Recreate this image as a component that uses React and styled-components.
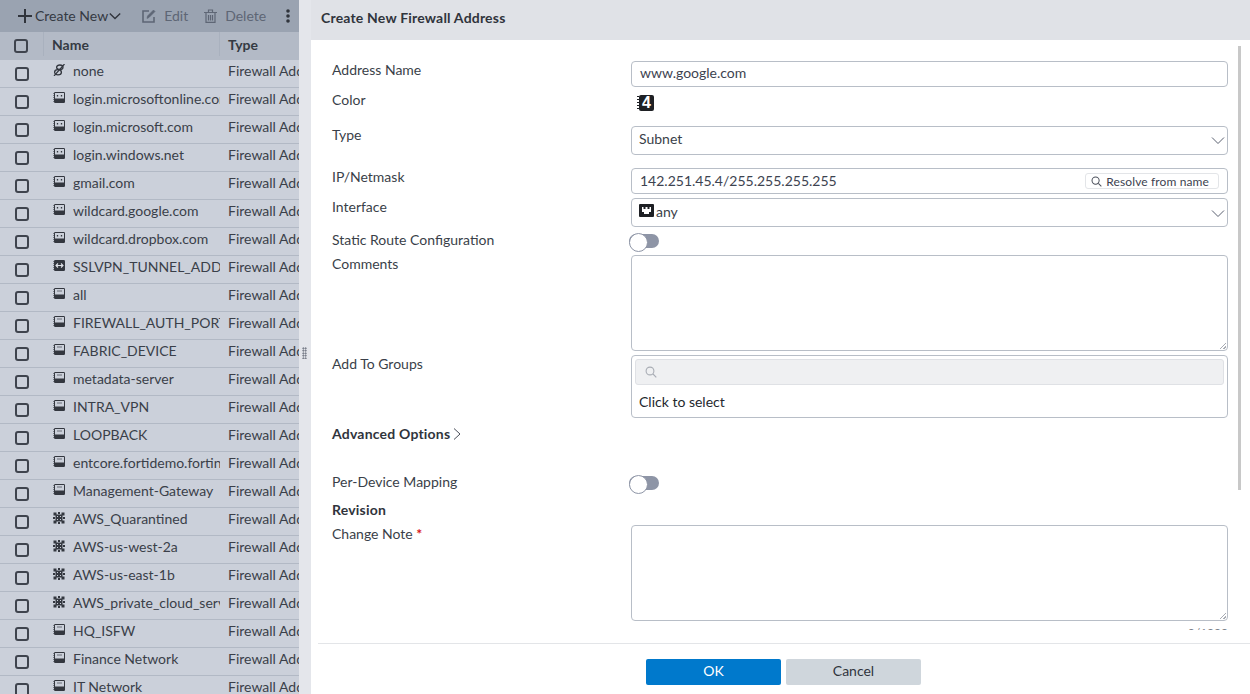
import React from 'react'
import styled, { createGlobalStyle } from 'styled-components'

const GlobalStyle = createGlobalStyle`
  html, body { margin: 0; padding: 0; height: 100%; overflow: hidden; }
  body { font-family: Lato, "Liberation Sans", sans-serif; font-size: 14px; color: #373c45; }
  * { box-sizing: border-box; }
`

const rows = [
  ['none', 'none'],
  ['login.microsoftonline.com', 'fqdn'],
  ['login.microsoft.com', 'fqdn'],
  ['login.windows.net', 'fqdn'],
  ['gmail.com', 'fqdn'],
  ['wildcard.google.com', 'fqdn'],
  ['wildcard.dropbox.com', 'fqdn'],
  ['SSLVPN_TUNNEL_ADDR1', 'range'],
  ['all', 'subnet'],
  ['FIREWALL_AUTH_PORTAL_ADDRESS', 'subnet'],
  ['FABRIC_DEVICE', 'subnet'],
  ['metadata-server', 'subnet'],
  ['INTRA_VPN', 'subnet'],
  ['LOOPBACK', 'subnet'],
  ['entcore.fortidemo.fortinet.com', 'subnet'],
  ['Management-Gateway', 'subnet'],
  ['AWS_Quarantined', 'dynamic'],
  ['AWS-us-west-2a', 'dynamic'],
  ['AWS-us-east-1b', 'dynamic'],
  ['AWS_private_cloud_servers', 'dynamic'],
  ['HQ_ISFW', 'subnet'],
  ['Finance Network', 'subnet'],
  ['IT Network', 'subnet'],
]

const Page = styled.div`
  display: flex;
  width: 100vw;
  height: 100vh;
  overflow: hidden;
  background: #fff;
`

const ListPane = styled.div`
  width: 299px;
  flex: none;
  background: #cbd0da;
  overflow: hidden;
`

const Toolbar = styled.div`
  display: flex;
  align-items: center;
  height: 32px;
  padding-left: 18px;
  background: #9aa3b1;
`

const ToolButton = styled.span`
  display: flex;
  align-items: center;
  margin-left: ${p => p.$gap || 0}px;
  gap: ${p => p.$inner || 0}px;
  color: ${p => (p.$disabled ? '#5e6675' : '#353a43')};
  line-height: 18px;
  white-space: nowrap;
`

const Caret = styled.svg`
  width: 12px;
  height: 12px;
  margin-left: -2px;
`

const HeaderRow = styled.div`
  display: flex;
  height: 28px;
  background: #b3bac6;
  font-weight: 700;
  line-height: 26px;
  color: #353a43;
`

const HeadCheck = styled.div`
  width: 43px;
  flex: none;
  padding: 7px 0 0 14px;
`

const HeadCell = styled.div`
  width: ${p => p.$width}px;
  flex: none;
  padding-left: 8px;
  border-left: 1px solid #a9b1be;
  height: 24px;
`

const Row = styled.div`
  display: flex;
  height: 28px;
  border-bottom: 1px solid #b2b9c5;
  line-height: 22px;
  color: #3a3f49;
`

const RowCheck = styled.div`
  width: 53px;
  flex: none;
  padding: 7px 0 0 15px;
`

const Box = styled.span`
  display: block;
  width: 14px;
  height: 14px;
  border: 2px solid #3f444e;
  border-radius: 3px;
`

const NameCell = styled.div`
  width: 167px;
  flex: none;
  display: flex;
  overflow: hidden;
  white-space: nowrap;
  gap: 8px;
`

const NameIcon = styled.svg`
  width: 12px;
  height: 12px;
  flex: none;
  margin-top: 4px;
  color: #33373f;
`

const TypeCell = styled.div`
  width: 79px;
  flex: none;
  padding-left: 8px;
  overflow: hidden;
  white-space: nowrap;
`

const Gutter = styled.div`
  position: relative;
  width: 12px;
  flex: none;
  background: #e4e6eb;
`

const GripDots = styled.span`
  position: absolute;
  left: 3px;
  top: 347px;
  width: 5px;
  height: 12px;
  background-image: radial-gradient(#5c6270 0.8px, transparent 0.9px);
  background-size: 2.5px 2.5px;
`

const Panel = styled.div`
  position: relative;
  flex: 1;
  min-width: 0;
  display: flex;
  flex-direction: column;
`

const PanelTitle = styled.div`
  height: 40px;
  flex: none;
  padding-left: 10px;
  background: #e0e2e7;
  font-weight: 700;
  letter-spacing: 0.19px;
  line-height: 36px;
  color: #30343c;
`

const FormBody = styled.div`
  height: 590px;
  flex: none;
  padding: 21px 0 0 21px;
  overflow: hidden;
`

const Field = styled.div`
  display: grid;
  grid-template-columns: 299px 597px;
  height: ${p => p.$height}px;
  margin-bottom: ${p => p.$after || 0}px;
`

const Label = styled.div`
  line-height: 18px;
  color: #3a3f49;
`

const ColorLabel = styled(Label)`
  line-height: 16px;
`

const SectionLabel = styled(Label)`
  display: flex;
  align-items: center;
  font-weight: 700;
  letter-spacing: 0.2px;
  color: #30343c;
  gap: 3px;
`

const Required = styled.span`
  color: #d8151b;
  font-weight: 700;
`

const TextInput = styled.div`
  display: flex;
  align-items: center;
  justify-content: space-between;
  height: 100%;
  padding: 0 8px ${p => p.$lift || 0}px;
  border: 1px solid #b8bec7;
  border-radius: 4px;
  color: #3d4350;
`

const SelectBox = styled(TextInput)`
  padding-left: 7px;
  padding-right: 2px;
  color: #3a3f49;
`

const ResolveButton = styled.span`
  display: flex;
  align-items: center;
  gap: 4px;
  height: 16px;
  margin-top: 2px;
  padding: 0 9px 0 5px;
  border: 1px solid #e3e5e8;
  border-radius: 3px;
  font-size: 12px;
  letter-spacing: 0.12px;
  color: #3d4350;
`

const ColorChip = styled.span`
  position: relative;
  display: block;
  width: 15px;
  height: 16px;
  margin: 3px 0 0 8px;
  background: #1e2024;
  border-radius: 2px;
  color: #fff;
  font: 700 16px/16px "Liberation Sans", sans-serif;
  text-align: center;

  &::before {
    content: '';
    position: absolute;
    left: -2px;
    top: 1px;
    width: 2px;
    height: 14px;
    background-image: linear-gradient(#1e2024 50%, transparent 50%);
    background-size: 2px 3px;
  }
`

const AnyIcon = styled.svg`
  width: 15px;
  height: 14px;
  flex: none;
  margin: 0 2px 2px 0;
`

const InlineValue = styled.span`
  display: flex;
  align-items: center;
`

const ChevronWrap = styled.span`
  display: block;
  height: 14px;
  margin-top: 2px;
`

const Toggle = styled.span`
  position: relative;
  display: block;
  width: 30px;
  height: 14px;
  margin: 3px 0 0 -2px;
  background: #8e95a6;
  border-radius: 7px;

  &::before {
    content: '';
    position: absolute;
    left: 0;
    top: -1.5px;
    width: 17px;
    height: 17px;
    background: #fff;
    border: 1px solid #8e95a6;
    border-radius: 50%;
  }
`

const Area = styled.textarea`
  display: block;
  width: 100%;
  height: 100%;
  margin: 0;
  border: 1px solid #b8bec7;
  border-radius: 4px;
  background: #fff;
  outline: none;

  &::-webkit-resizer {
    background-image:
      linear-gradient(135deg, #fff 50%, transparent 50%),
      repeating-linear-gradient(135deg, transparent 0 1.5px, #a8acb4 1.5px 2.5px);
    background-size: 8px 8px;
    background-position: right 1px bottom 1px;
    background-repeat: no-repeat;
  }
`

const GroupBox = styled.div`
  height: 100%;
  padding: 3px;
  border: 1px solid #b8bec7;
  border-radius: 4px;
`

const GroupSearch = styled.div`
  display: flex;
  align-items: center;
  height: 26px;
  padding-left: 9px;
  background: #eff0f2;
  border: 1px solid #dfe1e5;
  border-radius: 3px;
`

const GroupHint = styled.div`
  padding: 8px 0 0 4px;
  line-height: 18px;
  color: #24272d;
`

const CharCount = styled.div`
  width: 896px;
  padding-top: 5px;
  font-size: 12px;
  line-height: 14px;
  text-align: right;
  color: #7b808a;
`

const ScrollThumb = styled.span`
  position: absolute;
  left: 927px;
  top: 46px;
  width: 3px;
  height: 444px;
  background: #c8c8c8;
`

const Footer = styled.div`
  display: flex;
  gap: 5px;
  margin: 13px 0 0 7px;
  padding: 15px 0 0 328px;
  border-top: 1px solid #e3e5e8;
`

const ActionButton = styled.span`
  width: 135px;
  height: 26px;
  border-radius: 2px;
  background: ${p => (p.$primary ? '#0079cc' : '#cfd6dc')};
  color: ${p => (p.$primary ? '#fff' : '#30343c')};
  text-align: center;
  line-height: 24px;
`

const Chevron = () => (
  <ChevronWrap>
    <svg width="14" height="14" viewBox="0 0 14 14" fill="none" stroke="#5a6070" strokeWidth="1">
      <path d="M1 4.500 7 10.500 13 4.500" />
    </svg>
  </ChevronWrap>
)

const Search = ({ color = '#4a4f5a', size = 11 }) => (
  <svg width={size} height={size} viewBox="0 0 12 12" fill="none" stroke={color} strokeWidth="1.1">
    <circle cx="5" cy="5" r="3.9" />
    <path d="M8 8 11.300 11.300" />
  </svg>
)

const AddressIcon = ({ kind }) => {
  if (kind === 'none') {
    return (
      <NameIcon viewBox="0 0 12 12" fill="none" stroke="currentColor">
        <ellipse cx="6.800" cy="3.200" rx="3.200" ry="2.200" strokeWidth="1.300" />
        <ellipse cx="5" cy="8.200" rx="3.400" ry="2.600" strokeWidth="1.300" />
        <path d="M11.500 0 1 12" strokeWidth="1.200" />
      </NameIcon>
    )
  }
  if (kind === 'dynamic') {
    return (
      <NameIcon viewBox="0 0 12 12" fill="currentColor">
        <path d="M.5.5h3v2h5v-2h3v3h-2v5h2v3h-3v-2h-5v2h-3v-3h2v-5h-2zM0 5h2v2H0zM10 5h2v2h-2zM5 0h2v2H5zM5 10h2v2H5z" />
        <path d="M4 4h1v1H4zM7 4h1v1H7zM4 7h1v1H4zM7 7h1v1H7z" fill="#cbd0da" />
      </NameIcon>
    )
  }
  return (
    <NameIcon viewBox="0 0 12 12">
      <rect x="1" y="0" width="11" height="11" rx="1.200" fill="currentColor" />
      <path d="M0 1.500h.7M0 3.500h.7M0 5.500h.7M0 7.500h.7M0 9.500h.7" stroke="#5a5f69" strokeWidth="1" />
      {kind === 'fqdn' && <rect x="2" y="1" width="9" height="5.500" fill="#cbd0da" />}
      {kind === 'fqdn' && <path d="M4.500 3v1.500M8.500 3v1.500" stroke="#33373f" strokeWidth="1.300" />}
      {kind === 'subnet' && <rect x="2" y="1" width="9" height="5.500" fill="#cbd0da" />}
      {kind === 'subnet' && <path d="M4 3h5" stroke="#6a6f79" strokeWidth="1" />}
      {kind === 'range' && (
        <path d="M3 5.500h7M5 3.500 3 5.500 5 7.500M8 3.500 10 5.500 8 7.500" fill="none" stroke="#dfe2e8" strokeWidth="1.100" />
      )}
    </NameIcon>
  )
}

const App = () => (
  <Page>
    <GlobalStyle />
    <ListPane>
      <Toolbar>
        <ToolButton $inner={3}>
          <svg width="14" height="14" viewBox="0 0 14 14" fill="#30343c">
            <path d="M6 0h2v6h6v2H8v6H6V8H0V6h6z" />
          </svg>
          Create New
          <Caret viewBox="0 0 12 12" fill="none" stroke="#30343c" strokeWidth="1.400">
            <path d="M.8 3.500 6 8.500 11.200 3.500" />
          </Caret>
        </ToolButton>
        <ToolButton $gap={21} $inner={8} $disabled>
          <svg width="14" height="14" viewBox="0 0 14 14" fill="none" stroke="#5e6675" strokeWidth="1.600">
            <path d="M12 8v5H1V2h6" />
            <path d="M5 9.500 5.500 7 11.500 1 13 2.500 7 8.500z" fill="#5e6675" strokeWidth=".6" />
          </svg>
          Edit
        </ToolButton>
        <ToolButton $gap={16} $inner={8} $disabled>
          <svg width="13" height="14" viewBox="0 0 13 14" fill="none" stroke="#5e6675" strokeWidth="1.200">
            <path d="M0 3.500h13M4.500 3V1h4v2M2 4v9.400h9V4M4.500 6v5.500M6.500 6v5.500M8.500 6v5.500" />
          </svg>
          Delete
        </ToolButton>
        <ToolButton $gap={20}>
          <svg width="4" height="14" viewBox="0 0 4 14" fill="#30343c">
            <circle cx="2" cy="2" r="1.800" />
            <circle cx="2" cy="7" r="1.800" />
            <circle cx="2" cy="12" r="1.800" />
          </svg>
        </ToolButton>
      </Toolbar>
      <HeaderRow>
        <HeadCheck><Box /></HeadCheck>
        <HeadCell $width={176}>Name</HeadCell>
        <HeadCell $width={80}>Type</HeadCell>
      </HeaderRow>
      {rows.map(([name, kind]) => (
        <Row key={name}>
          <RowCheck><Box /></RowCheck>
          <NameCell>
            <AddressIcon kind={kind} />
            <span>{name}</span>
          </NameCell>
          <TypeCell>Firewall Address</TypeCell>
        </Row>
      ))}
    </ListPane>
    <Gutter><GripDots /></Gutter>
    <Panel>
      <PanelTitle>Create New Firewall Address</PanelTitle>
      <FormBody>
        <Field $height={26} $after={5}>
          <Label>Address Name</Label>
          <TextInput $lift={4}>www.google.com</TextInput>
        </Field>
        <Field $height={20} $after={14}>
          <ColorLabel>Color</ColorLabel>
          <div><ColorChip>4</ColorChip></div>
        </Field>
        <Field $height={29} $after={13}>
          <Label>Type</Label>
          <SelectBox $lift={4}>Subnet<Chevron /></SelectBox>
        </Field>
        <Field $height={26} $after={4}>
          <Label>IP/Netmask</Label>
          <TextInput $lift={2}>
            142.251.45.4/255.255.255.255
            <ResolveButton><Search size={11} />Resolve from name</ResolveButton>
          </TextInput>
        </Field>
        <Field $height={29} $after={4}>
          <Label>Interface</Label>
          <SelectBox $lift={2}>
            <InlineValue>
              <AnyIcon viewBox="0 0 15 14">
                <rect width="15" height="13" rx="1" fill="#1e2024" />
                <path d="M3 3h1.500v2h2V3h2v2h2V3H12v5h-2v2H5V8H3z" fill="#fff" />
              </AnyIcon>
              any
            </InlineValue>
            <Chevron />
          </SelectBox>
        </Field>
        <Field $height={18} $after={6}>
          <Label>Static Route Configuration</Label>
          <div><Toggle /></div>
        </Field>
        <Field $height={96} $after={4}>
          <Label>Comments</Label>
          <Area readOnly />
        </Field>
        <Field $height={63} $after={7}>
          <Label>Add To Groups</Label>
          <GroupBox>
            <GroupSearch><Search color="#a9adb5" size={12} /></GroupSearch>
            <GroupHint>Click to select</GroupHint>
          </GroupBox>
        </Field>
        <Field $height={18} $after={30}>
          <SectionLabel>
            Advanced Options
            <svg width="8" height="14" viewBox="0 0 8 14" fill="none" stroke="#4a4f5a" strokeWidth="1">
              <path d="M1 1.500 7 7 1 12.500" />
            </svg>
          </SectionLabel>
        </Field>
        <Field $height={18} $after={10}>
          <Label>Per-Device Mapping</Label>
          <div><Toggle /></div>
        </Field>
        <Field $height={18} $after={6}>
          <SectionLabel>Revision</SectionLabel>
        </Field>
        <Field $height={96}>
          <Label>Change Note <Required>*</Required></Label>
          <Area readOnly />
        </Field>
        <CharCount>0/1000</CharCount>
      </FormBody>
      <Footer>
        <ActionButton $primary>OK</ActionButton>
        <ActionButton>Cancel</ActionButton>
      </Footer>
      <ScrollThumb />
    </Panel>
  </Page>
)

export default App
